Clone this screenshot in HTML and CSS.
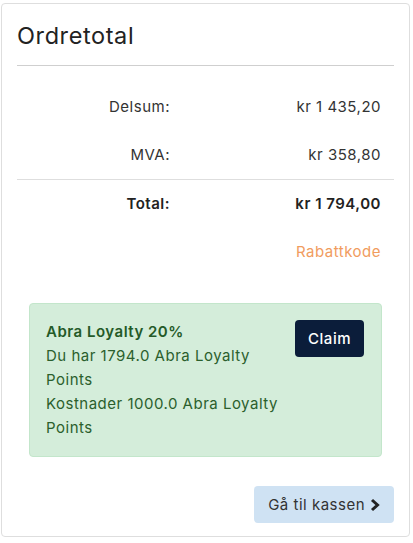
FILE: index.html
```html
<!DOCTYPE html>
<html lang="no">
<head>
<meta charset="utf-8">
<link rel="stylesheet" href="styles.css">
</head>
<body>
<div class="card">
  <h2 class="title">Ordretotal</h2>
  <div class="rows">
    <div class="row"><span class="label">Delsum:</span><span class="value">kr 1 435,20</span></div>
    <div class="row"><span class="label">MVA:</span><span class="value">kr 358,80</span></div>
    <div class="row total"><span class="label">Total:</span><span class="value">kr 1 794,00</span></div>
  </div>
  <div class="coupon"><a class="coupon-link">Rabattkode</a></div>
  <div class="loyalty">
    <div class="loyalty-text">
      <div class="loyalty-title">Abra Loyalty 20%</div>
      <div>Du har 1794.0 Abra Loyalty Points</div>
      <div>Kostnader 1000.0 Abra Loyalty Points</div>
    </div>
    <button class="claim">Claim</button>
  </div>
  <div class="actions">
    <button class="checkout">Gå til kassen <svg class="chev" width="10" height="14" viewBox="0 0 10 14"><path d="M2 2 L7.5 7 L2 12" fill="none" stroke="#222" stroke-width="3"/></svg></button>
  </div>
</div>
</body>
</html>
```
FILE: styles.css
```css
html, body { margin: 0; padding: 0; background: #fff; }
body {
  font-family: Inter, "Open Sans", sans-serif;
  color: #333;
  font-size: 15px;
  letter-spacing: 0.5px;
}
.card {
  margin: 3px 3px 0 1px;
  height: 534px;
  box-sizing: border-box;
  border: 1px solid #dedede;
  border-radius: 4px;
  padding: 0 15px;
}
.title {
  margin: 0;
  font-weight: 400;
  font-size: 23.5px;
  letter-spacing: 0.6px;
  color: #222;
  padding: 18px 0 16px;
  line-height: 27px;
  border-bottom: 1px solid #cfcfcf;
}
.rows { padding-top: 17px; }
.row {
  display: grid;
  grid-template-columns: 153px 1fr;
  padding: 14px 0;
  line-height: 20px;
  margin-right: 13px;
}
.row .label { text-align: right; }
.row .value { text-align: right; }
.row.total {
  font-weight: 600;
  color: #222;
  border-top: 1px solid #dedede;
  margin-left: 0;
  margin-right: 0;
  padding-right: 13px;
}
.coupon { text-align: right; padding: 14px 13px 0 0; line-height: 20px; }
.coupon-link { color: #f19c5e; }
.loyalty {
  margin: 41px 12px 0 12px;
  background: #d4edda;
  border: 1px solid #c3e6cb;
  border-radius: 4px;
  padding: 16px 16px 16px 16px;
  display: flex;
  justify-content: space-between;
  align-items: flex-start;
  color: #2b5f2d;
  line-height: 24px;
}
.loyalty-text { width: 240px; }
.loyalty-title { font-weight: 600; color: #245a28; }
.claim {
  background: #0b1d3a;
  color: #fff;
  border: none;
  border-radius: 4px;
  font: 500 15px Inter, "Open Sans", sans-serif;
  letter-spacing: 0.5px;
  padding: 0 13px;
  height: 37px;
  margin-right: 1px;
}
.actions {
  display: flex;
  justify-content: flex-end;
  margin-top: 29px;
}
.checkout {
  background: #cfe2f3;
  color: #333;
  border: none;
  border-radius: 4px;
  font: 400 15px Inter, "Open Sans", sans-serif;
  letter-spacing: 0.5px;
  height: 37px;
  padding: 0 14px;
  display: flex;
  align-items: center;
  gap: 5px;
}
```
